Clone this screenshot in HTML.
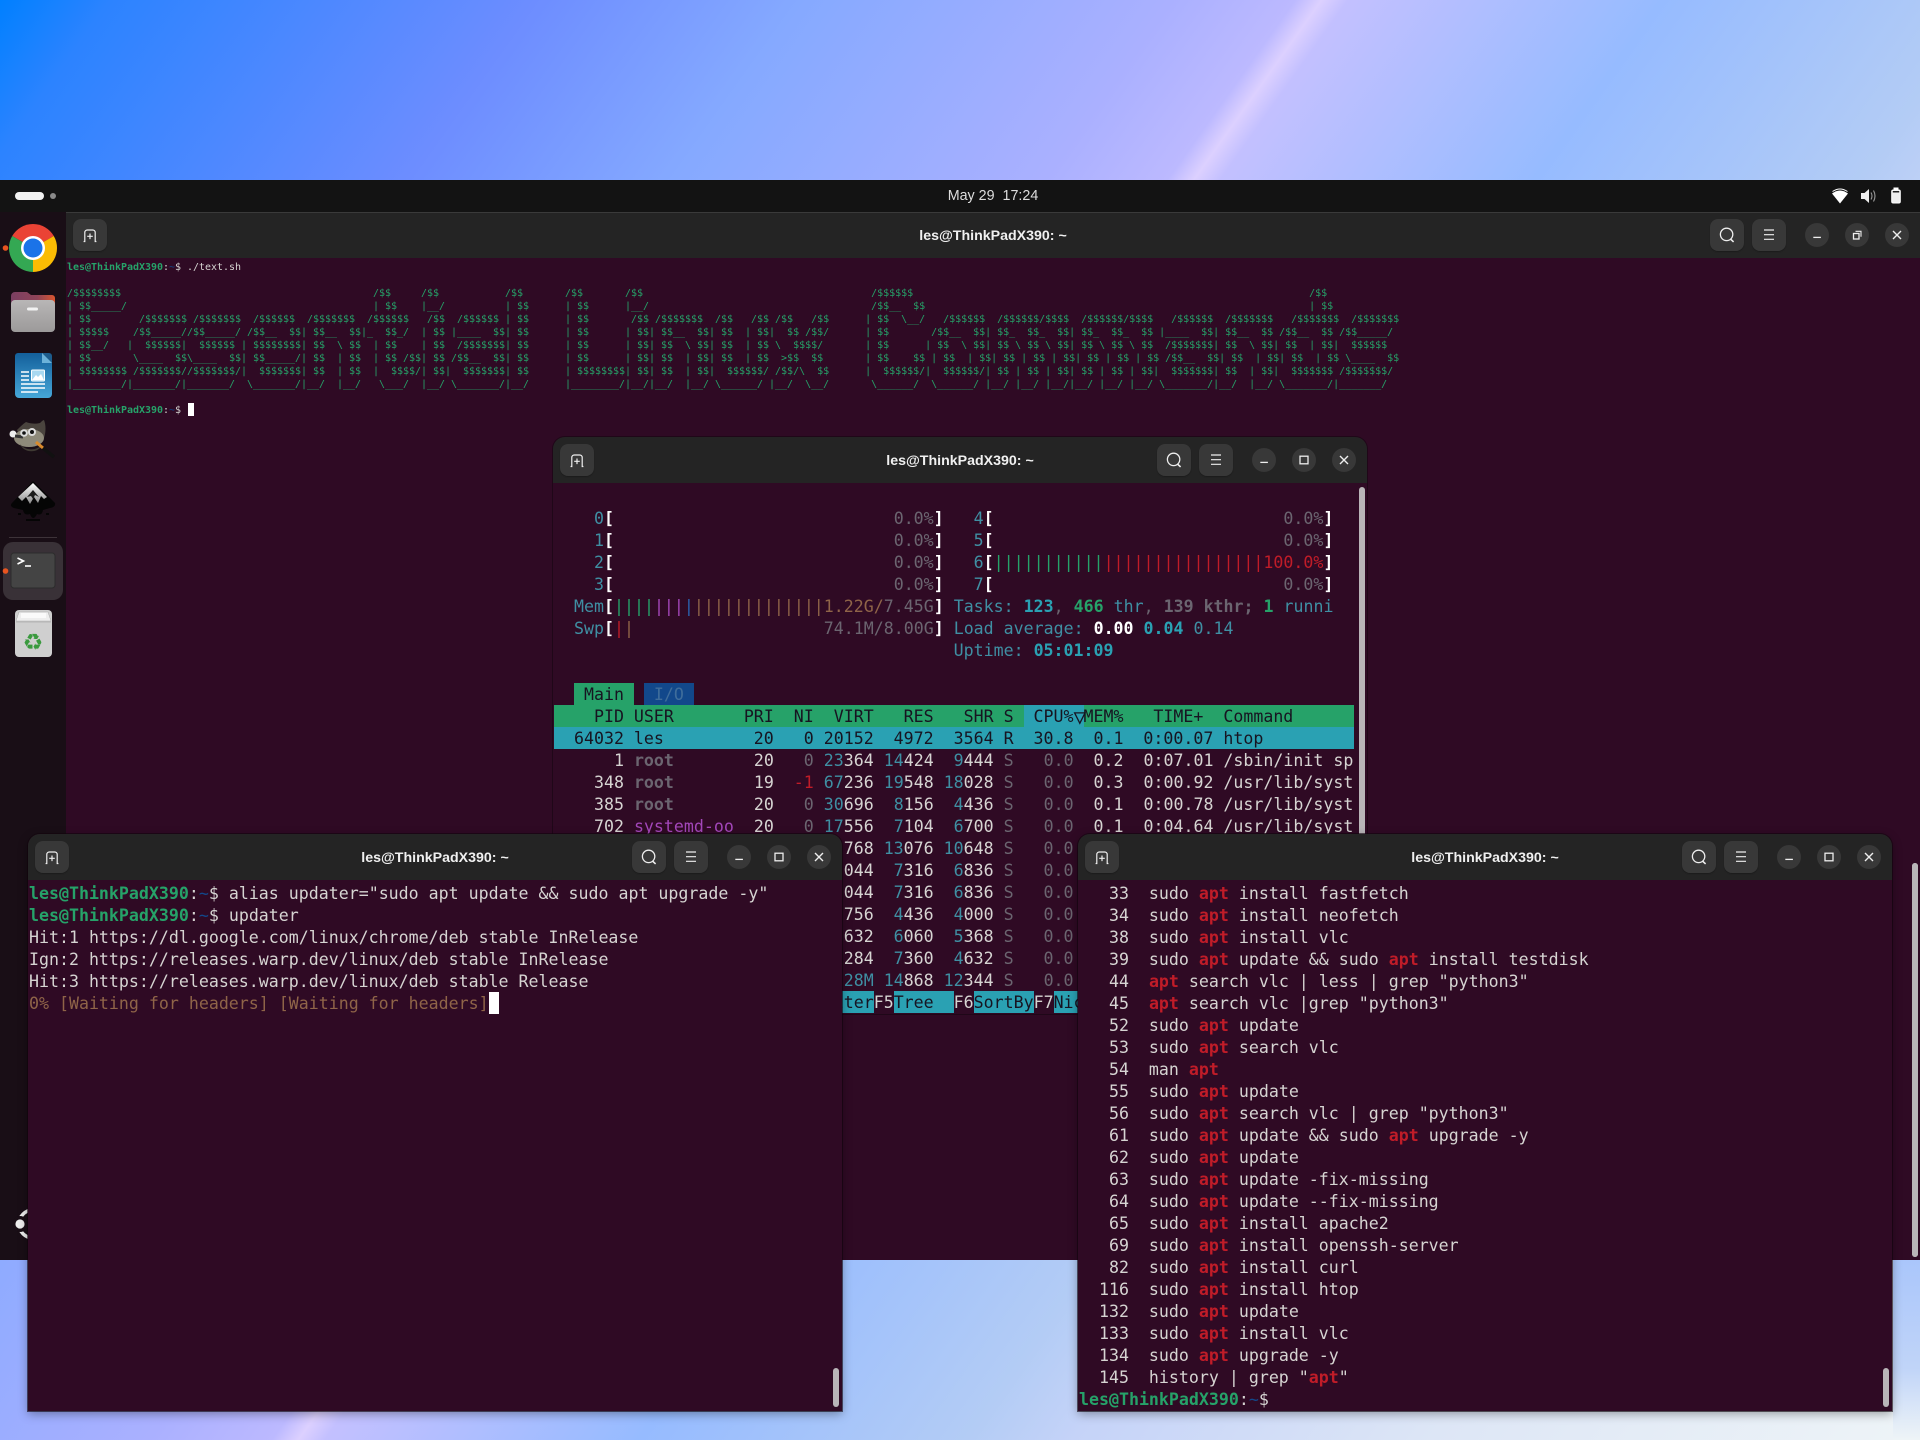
<!DOCTYPE html>
<html><head><meta charset="utf-8"><title>Ubuntu desktop</title>
<style>
html,body{margin:0;padding:0;width:1920px;height:1440px;overflow:hidden;background:#8fb8ff}
#wp{position:absolute;left:0;top:0;width:1920px;height:1440px;background:linear-gradient(125.4deg,#0080ff 0%,#2c83ff 3.75%,#6d8dff 18.2%,#85a9ff 27.2%,#aab0ff 39.8%,#bcb9ff 44%,#dcd0ff 44.9%,#c3c0ff 45.8%,#96bbff 56.5%,#b3ccf5 67.6%,#c5d3f8 71.2%,#dde6f6 83.4%,#eef4f7 100%)}
#strip{position:absolute;left:1893px;top:1260px;width:27px;height:180px;background:linear-gradient(180deg,#aac6fb 0%,#c0d4f8 60%,#eef4f7 100%)}
#top{position:absolute;left:0;top:180px;width:1920px;height:32px;background:#131313}
#clock{position:absolute;left:0;width:1986px;text-align:center;top:7px;font:14.3px/18px "Liberation Sans",sans-serif;color:#dedede;white-space:pre}
#dock{position:absolute;left:0;top:212px;width:66px;height:1048px;background:#190e16}
.win{position:absolute;background:#2f0a24}
.tb{position:absolute;left:0;top:0;right:0;height:46px;background:#242424;border-radius:12px 12px 0 0}
.tt{position:absolute;left:0;right:0;top:15px;text-align:center;font:bold 14.2px/18px "Liberation Sans",sans-serif;color:#f0f0f0;white-space:pre}
.bt{position:absolute;top:7px;width:34px;height:32px;border-radius:8px;background:#383838;box-shadow:0 1px 1px #1c1c1c}
.ci{position:absolute;top:11px;width:24px;height:24px;border-radius:12px;background:#383838}
.bt svg,.ci svg{position:absolute;left:0;top:0;width:100%;height:100%}
pre{position:absolute;margin:0;font:16.6px/22px "DejaVu Sans Mono",monospace;color:#d6d4d2;white-space:pre}
pre.sm{font-size:10px;line-height:13px;letter-spacing:-.02px}
.c{color:#2aa1b3}.d{color:#3f8fa3}.g{color:#6b6570}.gb{color:#6b6570;font-weight:bold}.w{color:#fff;font-weight:bold}.r{color:#c01c28}.G{color:#26a269}.o{color:#8f6448}.p{color:#a347ba}.B{color:#2a62b0}
.cb{color:#2aa1b3;font-weight:bold}.Gb{color:#26a269;font-weight:bold}.u{color:#12488b}.rb{color:#c01c28;font-weight:bold}
.bg{display:inline-block;height:22px;vertical-align:top}
.bt1{background:linear-gradient(#2aa1b3,#2aa1b3) top/100% 21px no-repeat;box-shadow:0 -1px 0 #2aa1b3;color:#171421}
.bm{background:linear-gradient(#26a269,#26a269) top/100% 21px no-repeat;box-shadow:0 -1px 0 #26a269;color:#171421}
.bi{background:linear-gradient(#12488b,#12488b) top/100% 21px no-repeat;box-shadow:0 -1px 0 #12488b;color:#3f6d9b}
.tri{display:inline-block;width:10px;font-size:21px;line-height:22px;height:22px;vertical-align:top}
.hd{position:absolute;left:554px;width:800px;height:22px}
.k{color:#171421}
.sb{position:absolute;width:6px;border-radius:3px;background:#b9b5b8}
</style></head><body>
<svg width="0" height="0" style="position:absolute"><defs>
<symbol id="tab" viewBox="0 0 34 32"><path d="M10.6 22.500h1.200v-9a2.500 2.500 0 0 1 2.500-2.500h5.400a2.500 2.500 0 0 1 2.500 2.500v9h1.200" fill="none" stroke="#eee" stroke-width="1.200"/><path d="M17 14.500v5.600M14.200 17.300h5.600" stroke="#eee" stroke-width="1.200"/></symbol>
<symbol id="srch" viewBox="0 0 34 32"><circle cx="16.600" cy="15.400" r="6.200" fill="none" stroke="#eee" stroke-width="1.300"/><path d="M20.800 20.300l2.800 2.600" stroke="#eee" stroke-width="1.600"/></symbol>
<symbol id="menu" viewBox="0 0 34 32"><path d="M12 11h10M12 15.700h10M12 20.300h10" stroke="#eee" stroke-width="1.200"/></symbol>
<symbol id="min" viewBox="0 0 24 24"><path d="M8.300 14.400h7.600" stroke="#eee" stroke-width="1.300"/></symbol>
<symbol id="max" viewBox="0 0 24 24"><rect x="8" y="8.200" width="8" height="7.600" fill="none" stroke="#eee" stroke-width="1.300"/></symbol>
<symbol id="res" viewBox="0 0 24 24"><rect x="8.500" y="10.500" width="5.500" height="5.500" fill="none" stroke="#eee" stroke-width="1.300"/><path d="M10.500 8.300h5.500v5.500" fill="none" stroke="#eee" stroke-width="1.100"/></symbol>
<symbol id="cls" viewBox="0 0 24 24"><path d="M8 8l8 8M16 8l-8 8" stroke="#eee" stroke-width="1.400"/></symbol>
</defs></svg>
<div id="wp"></div><div id="strip"></div>

<div id="top">
<div style="position:absolute;left:15px;top:12px;width:29px;height:8px;border-radius:4px;background:#f2f2f2"></div>
<div style="position:absolute;left:50px;top:13px;width:6px;height:6px;border-radius:3px;background:#8a8a8a"></div>
<div id="clock">May 29  17:24</div>
<svg style="position:absolute;left:1825px;top:0" width="95" height="32" viewBox="0 0 95 32">
<path d="M7 13.500Q15 7.500 23 13.500L15 23.500Z" fill="#fff"/><path d="M7.500 11.500Q15 6.500 22.500 11.500" fill="none" stroke="#fff" stroke-width="1"/>
<path d="M36 13h3.500l4.500-4v14l-4.500-4H36z" fill="#eee"/><path d="M46 12.500q2 3.500 0 7M48.500 10.500q3 5.500 0 11" fill="none" stroke="#999" stroke-width="1.100"/>
<rect x="66.700" y="10" width="8.600" height="13" rx="1.500" fill="#eee" stroke="#fff"/><rect x="68.500" y="7.500" width="5" height="2" fill="#fff"/><rect x="67.800" y="11" width="6.400" height="1.500" fill="#222"/>
</svg>
</div>

<div id="dock"></div>
<svg style="position:absolute;left:0;top:212px" width="66" height="1048" viewBox="0 212 66 1048">
<!-- chrome -->
<path d="M33 248L12.200 236A24 24 0 0 1 53.800 236Z" fill="#ea4335"/>
<path d="M33 248L53.800 236A24 24 0 0 1 33 272Z" fill="#fbbc04"/>
<path d="M33 248L33 272A24 24 0 0 1 12.200 236Z" fill="#34a853"/>
<circle cx="33" cy="248" r="12" fill="#fff"/><circle cx="33" cy="248" r="9.500" fill="#1a73e8"/>
<circle cx="5.500" cy="248" r="2.800" fill="#e95420"/>
<!-- files -->
<defs><linearGradient id="ft" x1="0" x2="1"><stop offset="0" stop-color="#7a3f62"/><stop offset="0.6" stop-color="#8f4458"/><stop offset="1" stop-color="#d9552f"/></linearGradient>
<linearGradient id="fb" x1="0" x2="0" y1="0" y2="1"><stop offset="0" stop-color="#b8b6b6"/><stop offset="1" stop-color="#9c9a9a"/></linearGradient>
<linearGradient id="wr" x1="0" x2="0" y1="0" y2="1"><stop offset="0" stop-color="#135f9b"/><stop offset="1" stop-color="#46a7d8"/></linearGradient>
<linearGradient id="ik" x1="0" x2="0" y1="0" y2="1"><stop offset="0" stop-color="#fff"/><stop offset="1" stop-color="#8a8a8a"/></linearGradient>
</defs>
<path d="M15 292h12l4 3h21a3 3 0 0 1 3 3v8H11v-10a4 4 0 0 1 4-4z" fill="url(#ft)"/>
<rect x="11" y="300" width="44" height="32" rx="4" fill="url(#fb)"/>
<rect x="27" y="307.500" width="11" height="3" rx="1.500" fill="#f2f2f2"/>
<!-- writer -->
<path d="M18 353H43L52 362V394a4 4 0 0 1-4 4H19a4 4 0 0 1-4-4V356a3 3 0 0 1 3-3z" fill="url(#wr)"/>
<path d="M42 353h7a3 3 0 0 1 3 3v7z" fill="#1d5c8c"/><path d="M42 353l10 10h-10z" fill="#8fd0f0" opacity=".7"/>
<path d="M21 372h8M21 376h8M21 380h8M21 384h24M21 388h24M21 392h17" stroke="#fff" stroke-width="1.600"/>
<rect x="31.500" y="370" width="13" height="11" rx="1" fill="#a8d8f0" stroke="#fff"/><path d="M32 380l4-5 2 2 3-3 3 6z" fill="#fff"/>
<!-- gimp -->
<path d="M17 430c3-3 6-6 9-8 5 2 10 2 14 1 1-1 3-3 4-3 2 5 2 12 0 18-5 5-22 6-27-8z" fill="#4a443e"/>
<ellipse cx="29" cy="438" rx="15" ry="9" fill="#8e8a7a"/>
<path d="M20 444c5 7 16 7 22 1-3 8-18 9-22-1z" fill="#3f3a33"/>
<circle cx="13" cy="434" r="3.500" fill="#eee"/><path d="M15 436l8 1" stroke="#333" stroke-width="3"/>
<circle cx="24" cy="433" r="3.800" fill="#ddd"/><circle cx="24" cy="433" r="1.800" fill="#111"/>
<circle cx="32" cy="432" r="4" fill="#ddd"/><circle cx="32" cy="432" r="2" fill="#111"/>
<path d="M36 442l7 6" stroke="#d98a2c" stroke-width="3"/><path d="M43 448l11 9" stroke="#111" stroke-width="3.500"/>
<!-- inkscape -->
<path d="M33 481L55 503Q56 507 50 508L43 510Q42 516 37 514Q33 522 30 514Q24 516 23 510L14 508Q9 506 12 503Z" fill="#050505"/>
<path d="M33 483L47 497L44 499L41 496L38 503L34 497L30 504L26 497L22 501L18 497Z" fill="url(#ik)"/>
<path d="M33 490l-6 7 4-1 2 3 2-4 4 2z" fill="#1c1c1c"/>
<path d="M26 520h14M18 514h3M46 514h3" stroke="#050505" stroke-width="2"/>
<!-- sep -->
<path d="M9 537.500H57" stroke="#3d3339" stroke-width="1"/>
<!-- terminal -->
<rect x="3" y="542" width="60" height="58" rx="10" fill="#393137"/>
<rect x="11" y="553" width="44" height="35" rx="3" fill="#444" stroke="#2c2c2c"/>
<path d="M17.500 558l6 3-6 3" fill="none" stroke="#fff" stroke-width="1.600"/><path d="M25 566h6" stroke="#fff" stroke-width="1.600"/>
<circle cx="5.500" cy="571" r="2.800" fill="#e95420"/>
<!-- trash -->
<rect x="15" y="610" width="37" height="47" rx="4" fill="#cfcfcf"/>
<path d="M19 612h29l3 9H16z" fill="#eee" stroke="#aaa" stroke-width=".5"/><rect x="21" y="613" width="25" height="5" fill="#fafafa"/>
<path d="M16 622h35" stroke="#b5b5b5"/>
<text x="33" y="650" text-anchor="middle" font-family="DejaVu Sans" font-size="23" fill="#3a9a3e">♻</text>
<!-- ubuntu -->
<circle cx="33" cy="1224" r="14" fill="none" stroke="#eee" stroke-width="3.500"/>
<circle cx="20" cy="1224" r="8" fill="#190e16"/><circle cx="20" cy="1224" r="4.600" fill="#eee"/>
</svg>

<!-- Window 1 -->
<div class="win" style="left:66px;top:212px;width:1854px;height:1048px">
<div class="tb" style="border-radius:0;border-top:1px solid #3a3a3a;height:45px">
<div class="tt" style="top:14px">les@ThinkPadX390: ~</div>
<div class="bt" style="left:7px;top:6px"><svg><use href="#tab"/></svg></div>
<div class="bt" style="right:176px;top:6px"><svg><use href="#srch"/></svg></div>
<div class="bt" style="right:134px;top:6px"><svg><use href="#menu"/></svg></div>
<div class="ci" style="right:91px;top:10px"><svg><use href="#min"/></svg></div>
<div class="ci" style="right:51px;top:10px"><svg><use href="#res"/></svg></div>
<div class="ci" style="right:11px;top:10px"><svg><use href="#cls"/></svg></div>
</div>
<div class="sb" style="left:1846px;top:651px;height:394px"></div>
</div>
<pre class="sm" style="left:67px;top:261px"><span class="Gb">les@ThinkPadX390</span>:<span class="u">~</span>$ ./text.sh

<span class="G">/$$$$$$$$                                          /$$     /$$           /$$       /$$       /$$                                      /$$$$$$                                                                  /$$
| $$_____/                                         | $$    |__/          | $$      | $$      |__/                                     /$$__  $$                                                                | $$
| $$        /$$$$$$$ /$$$$$$$  /$$$$$$  /$$$$$$$  /$$$$$$   /$$  /$$$$$$ | $$      | $$       /$$ /$$$$$$$  /$$   /$$ /$$   /$$      | $$  \__/   /$$$$$$  /$$$$$$/$$$$  /$$$$$$/$$$$   /$$$$$$  /$$$$$$$   /$$$$$$$  /$$$$$$$
| $$$$$    /$$_____//$$_____/ /$$__  $$| $$__  $$|_  $$_/  | $$ |____  $$| $$      | $$      | $$| $$__  $$| $$  | $$|  $$ /$$/      | $$       /$$__  $$| $$_  $$_  $$| $$_  $$_  $$ |____  $$| $$__  $$ /$$__  $$ /$$_____/
| $$__/   |  $$$$$$|  $$$$$$ | $$$$$$$$| $$  \ $$  | $$    | $$  /$$$$$$$| $$      | $$      | $$| $$  \ $$| $$  | $$ \  $$$$/       | $$      | $$  \ $$| $$ \ $$ \ $$| $$ \ $$ \ $$  /$$$$$$$| $$  \ $$| $$  | $$|  $$$$$$
| $$       \____  $$\____  $$| $$_____/| $$  | $$  | $$ /$$| $$ /$$__  $$| $$      | $$      | $$| $$  | $$| $$  | $$  >$$  $$       | $$    $$ | $$  | $$| $$ | $$ | $$| $$ | $$ | $$ /$$__  $$| $$  | $$| $$  | $$ \____  $$
| $$$$$$$$ /$$$$$$$//$$$$$$$/|  $$$$$$$| $$  | $$  |  $$$$/| $$|  $$$$$$$| $$      | $$$$$$$$| $$| $$  | $$|  $$$$$$/ /$$/\  $$      |  $$$$$$/|  $$$$$$/| $$ | $$ | $$| $$ | $$ | $$|  $$$$$$$| $$  | $$|  $$$$$$$ /$$$$$$$/
|________/|_______/|_______/  \_______/|__/  |__/   \___/  |__/ \_______/|__/      |________/|__/|__/  |__/ \______/ |__/  \__/       \______/  \______/ |__/ |__/ |__/|__/ |__/ |__/ \_______/|__/  |__/ \_______/|_______/</span>

<span class="Gb">les@ThinkPadX390</span>:<span class="u">~</span>$ </pre>
<div style="position:absolute;left:187.500px;top:403px;width:6px;height:13px;background:#fff"></div>

<!-- Window 2 htop -->
<div class="win" style="left:553px;top:437px;width:814px;height:577px;border-radius:12px 12px 0 0;box-shadow:0 0 0 1px #1f0718">
<div class="tb">
<div class="tt">les@ThinkPadX390: ~</div>
<div class="bt" style="left:7px"><svg><use href="#tab"/></svg></div>
<div class="bt" style="right:176px"><svg><use href="#srch"/></svg></div>
<div class="bt" style="right:134px"><svg><use href="#menu"/></svg></div>
<div class="ci" style="right:91px"><svg><use href="#min"/></svg></div>
<div class="ci" style="right:51px"><svg><use href="#max"/></svg></div>
<div class="ci" style="right:11px"><svg><use href="#cls"/></svg></div>
</div>
<div class="sb" style="left:806px;top:50px;height:520px"></div>
</div>
<div class="hd" style="top:705px;background:#26a269"></div>
<div class="hd" style="top:705px;left:1024px;width:60px;background:#2aa1b3"></div>
<div class="hd" style="top:727px;background:#2aa1b3"></div>
<pre style="left:554px;top:508px">    <span class="d">0</span><span class="w">[</span>                            <span class="g">0.0%</span><span class="w">]</span>   <span class="d">4</span><span class="w">[</span>                             <span class="g">0.0%</span><span class="w">]</span>
    <span class="d">1</span><span class="w">[</span>                            <span class="g">0.0%</span><span class="w">]</span>   <span class="d">5</span><span class="w">[</span>                             <span class="g">0.0%</span><span class="w">]</span>
    <span class="d">2</span><span class="w">[</span>                            <span class="g">0.0%</span><span class="w">]</span>   <span class="d">6</span><span class="w">[</span><span class="G">|||||||||||</span><span class="r">||||||||||||||||100.0%</span><span class="w">]</span>
    <span class="d">3</span><span class="w">[</span>                            <span class="g">0.0%</span><span class="w">]</span>   <span class="d">7</span><span class="w">[</span>                             <span class="g">0.0%</span><span class="w">]</span>
  <span class="d">Mem</span><span class="w">[</span><span class="G">||||</span><span class="p">|||</span><span class="B">|</span><span class="o">|||||||||||||1.22G/</span><span class="g">7.45G</span><span class="w">]</span> <span class="d">Tasks:</span> <span class="cb">123</span><span class="g">,</span> <span class="Gb">466</span> <span class="d">thr</span><span class="g">,</span> <span class="gb">139 kthr;</span> <span class="Gb">1</span> <span class="d">runni</span>
  <span class="d">Swp</span><span class="w">[</span><span class="r">|</span><span class="o">|</span>                   <span class="g">74.1M/8.00G</span><span class="w">]</span> <span class="d">Load average:</span> <span class="w">0.00</span> <span class="cb">0.04</span> <span class="d">0.14</span>
                                        <span class="d">Uptime:</span> <span class="cb">05:01:09</span>

  <span class="bg bm"> Main </span> <span class="bg bi"> I/O </span>
<span class="k">    PID USER       PRI  NI  VIRT   RES   SHR S  CPU%<span class="tri">▽</span>MEM%   TIME+  Command</span>
<span class="k">  64032 les         20   0 20152  4972  3564 R  30.8  0.1  0:00.07 htop</span>
      1 <span class="gb">root</span>        20   <span class="g">0</span> <span class="d">23</span>364 <span class="d">14</span>424  <span class="d">9</span>444 <span class="g">S   0.0</span>  0.2  0:07.01 /sbin/init sp
    348 <span class="gb">root</span>        19  <span class="r">-1</span> <span class="d">67</span>236 <span class="d">19</span>548 <span class="d">18</span>028 <span class="g">S   0.0</span>  0.3  0:00.92 /usr/lib/syst
    385 <span class="gb">root</span>        20   <span class="g">0</span> <span class="d">30</span>696  <span class="d">8</span>156  <span class="d">4</span>436 <span class="g">S   0.0</span>  0.1  0:00.78 /usr/lib/syst
    702 <span class="p">systemd-oo</span>  20   <span class="g">0</span> <span class="d">17</span>556  <span class="d">7</span>104  <span class="d">6</span>700 <span class="g">S   0.0</span>  0.1  0:04.64 /usr/lib/syst
                             768 <span class="d">13</span>076 <span class="d">10</span>648 <span class="g">S   0.0</span>
                             044  <span class="d">7</span>316  <span class="d">6</span>836 <span class="g">S   0.0</span>
                             044  <span class="d">7</span>316  <span class="d">6</span>836 <span class="g">S   0.0</span>
                             756  <span class="d">4</span>436  <span class="d">4</span>000 <span class="g">S   0.0</span>
                             632  <span class="d">6</span>060  <span class="d">5</span>368 <span class="g">S   0.0</span>
                             284  <span class="d">7</span>360  <span class="d">4</span>632 <span class="g">S   0.0</span>
                             <span class="d">28M</span> <span class="d">14</span>868 <span class="d">12</span>344 <span class="g">S   0.0</span>
                        F4<span class="bg bt1">Filter</span>F5<span class="bg bt1">Tree  </span>F6<span class="bg bt1">SortBy</span>F7<span class="bg bt1">Nice -</span></pre>

<!-- Window 3 -->
<div class="win" style="left:28px;top:834px;width:814px;height:577px;box-shadow:0 3px 10px rgba(0,0,0,.35),0 0 0 1px rgba(20,5,15,.6);border-radius:12px 12px 0 0">
<div class="tb">
<div class="tt">les@ThinkPadX390: ~</div>
<div class="bt" style="left:7px"><svg><use href="#tab"/></svg></div>
<div class="bt" style="right:176px"><svg><use href="#srch"/></svg></div>
<div class="bt" style="right:134px"><svg><use href="#menu"/></svg></div>
<div class="ci" style="right:91px"><svg><use href="#min"/></svg></div>
<div class="ci" style="right:51px"><svg><use href="#max"/></svg></div>
<div class="ci" style="right:11px"><svg><use href="#cls"/></svg></div>
</div>
<div class="sb" style="left:805px;top:534px;height:39px"></div>
</div>
<pre style="left:29px;top:883px"><span class="Gb">les@ThinkPadX390</span>:<span class="u">~</span>$ alias updater="sudo apt update &amp;&amp; sudo apt upgrade -y"
<span class="Gb">les@ThinkPadX390</span>:<span class="u">~</span>$ updater
Hit:1 https://dl.google.com/linux/chrome/deb stable InRelease
Ign:2 https://releases.warp.dev/linux/deb stable InRelease
Hit:3 https://releases.warp.dev/linux/deb stable Release
<span style="color:#8f6448">0% [Waiting for headers] [Waiting for headers]</span></pre>
<div style="position:absolute;left:489px;top:992px;width:10px;height:22px;background:#fff"></div>

<!-- Window 4 -->
<div class="win" style="left:1078px;top:834px;width:814px;height:577px;box-shadow:0 3px 10px rgba(0,0,0,.35),0 0 0 1px rgba(20,5,15,.6);border-radius:12px 12px 0 0">
<div class="tb">
<div class="tt">les@ThinkPadX390: ~</div>
<div class="bt" style="left:7px"><svg><use href="#tab"/></svg></div>
<div class="bt" style="right:176px"><svg><use href="#srch"/></svg></div>
<div class="bt" style="right:134px"><svg><use href="#menu"/></svg></div>
<div class="ci" style="right:91px"><svg><use href="#min"/></svg></div>
<div class="ci" style="right:51px"><svg><use href="#max"/></svg></div>
<div class="ci" style="right:11px"><svg><use href="#cls"/></svg></div>
</div>
<div class="sb" style="left:805px;top:534px;height:39px"></div>
</div>
<pre style="left:1079px;top:883px">   33  sudo <span class="rb">apt</span> install fastfetch
   34  sudo <span class="rb">apt</span> install neofetch
   38  sudo <span class="rb">apt</span> install vlc
   39  sudo <span class="rb">apt</span> update &amp;&amp; sudo <span class="rb">apt</span> install testdisk
   44  <span class="rb">apt</span> search vlc | less | grep "python3"
   45  <span class="rb">apt</span> search vlc |grep "python3"
   52  sudo <span class="rb">apt</span> update
   53  sudo <span class="rb">apt</span> search vlc
   54  man <span class="rb">apt</span>
   55  sudo <span class="rb">apt</span> update
   56  sudo <span class="rb">apt</span> search vlc | grep "python3"
   61  sudo <span class="rb">apt</span> update &amp;&amp; sudo <span class="rb">apt</span> upgrade -y
   62  sudo <span class="rb">apt</span> update
   63  sudo <span class="rb">apt</span> update -fix-missing
   64  sudo <span class="rb">apt</span> update --fix-missing
   65  sudo <span class="rb">apt</span> install apache2
   69  sudo <span class="rb">apt</span> install openssh-server
   82  sudo <span class="rb">apt</span> install curl
  116  sudo <span class="rb">apt</span> install htop
  132  sudo <span class="rb">apt</span> update
  133  sudo <span class="rb">apt</span> install vlc
  134  sudo <span class="rb">apt</span> upgrade -y
  145  history | grep "<span class="rb">apt</span>"
<span class="Gb">les@ThinkPadX390</span>:<span class="u">~</span>$</pre>
<div class="sb" style="left:1912px;top:863px;height:394px"></div>
</body></html>
